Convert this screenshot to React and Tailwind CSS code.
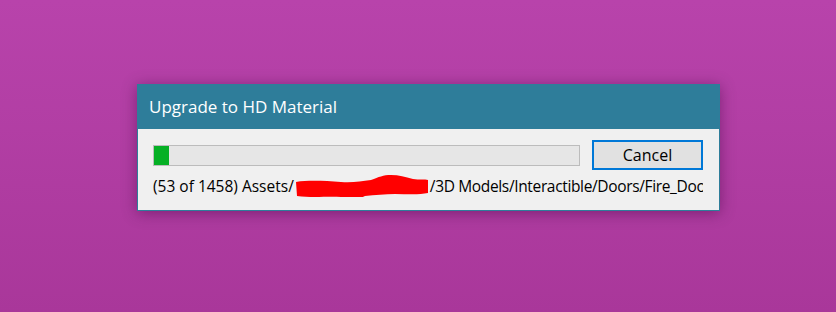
import React from 'react';

const font = { fontFamily: '"Segoe UI", "Open Sans", "Noto Sans", sans-serif' };

const Redaction = () => (
  <span className="relative inline-block w-[136px] h-[18px] align-middle">
    <svg width="136" height="28" viewBox="0 0 134 28" className="absolute left-0 top-[-5px]">
      <path
        d="M1 8 C14 6 30 7 46 8 C58 9 66 7 76 6 C84 3 88 1 96 1 C104 1 110 3 118 5 C124 6 130 5 133 6 L133 19 C124 21 112 20 100 20 C90 20 80 21 70 22 C62 26 54 27 46 23 C34 22 18 24 2 22 Z"
        fill="#ff0000"
      />
    </svg>
  </span>
);

const App = () => {
  return (
    <div
      className="w-[836px] h-[312px] overflow-hidden bg-gradient-to-b from-[#b843ab] to-[#a9379a] pt-[84px] pl-[137px]"
      style={font}
    >
      <div className="w-[583px] border border-[#2e7d9a] shadow-[0_2px_14px_rgba(60,0,60,0.45)]">
        {/* Title bar */}
        <div className="h-[44px] bg-[#2e7d9a] flex items-center pl-[11px] text-white text-[17px]">
          Upgrade to HD Material
        </div>

        {/* Body */}
        <div className="bg-[#f0f0f0] h-[81px] pt-[11px] pl-[15px] pr-[16px]">
          <div className="flex items-center">
            <div className="flex-1 h-[21px] border border-[#bcbcbc] bg-[#e6e6e6]">
              <div className="w-[15px] h-full bg-[#06b025]" />
            </div>
            <button className="ml-[12px] w-[111px] h-[30px] border-2 border-[#0078d7] bg-[#e1e1e1] text-[16px] text-black flex items-center justify-center pb-[1px]">
              Cancel
            </button>
          </div>
          <div className="mt-[5px] h-[22px] whitespace-nowrap overflow-hidden text-[15.5px] leading-[22px] text-black">
            (53 of 1458) Assets/<Redaction />
            <span className="tracking-[-0.35px]">/3D Models/Interactible/Doors/Fire_Door_HD_Material</span>
          </div>
        </div>
      </div>
    </div>
  );
};

export default App;
